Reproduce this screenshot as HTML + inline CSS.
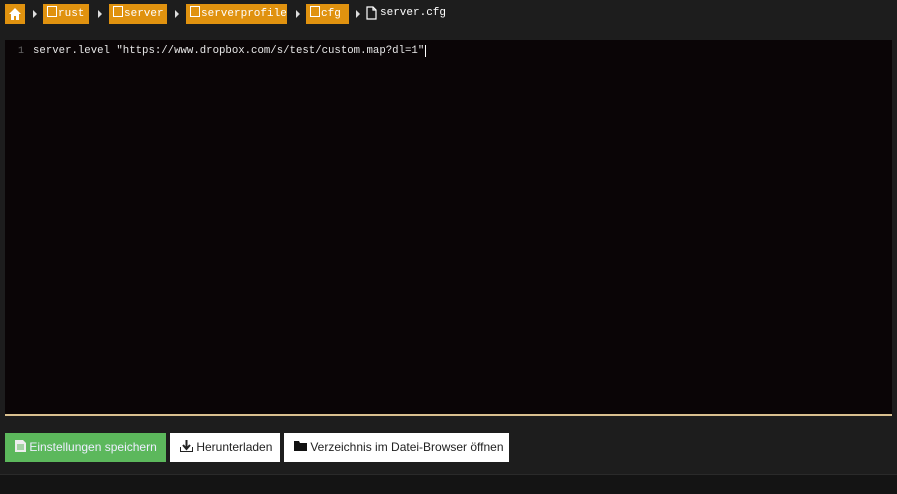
<!DOCTYPE html><html><head><style>
body{margin:0;width:897px;height:493px;background:#1d1d1d;position:relative;overflow:hidden;font-family:"Liberation Sans",sans-serif}
div{white-space:nowrap}
.bc{position:absolute;top:4px;height:20px;background:#e0920f;color:#fff;font:11px "Liberation Mono",monospace;line-height:20px;box-sizing:border-box;padding-left:4px}
.bc i{display:inline-block;width:8px;height:9px;border:1px solid #fff;vertical-align:-1px;margin-right:1px}
.ar{position:absolute;top:10px;width:0;height:0;border-left:4px solid #ddd;border-top:4px solid transparent;border-bottom:4px solid transparent}
.ed{position:absolute;left:5px;top:40px;width:887px;height:374px;background:#0a0506;border-bottom:2px solid #d9c08f}
.ln{position:absolute;left:18px;top:46px;color:#666;font:10px "Liberation Mono",monospace}
.code{position:absolute;left:33px;top:45px;color:#e8e8e8;font:10.7px "Liberation Mono",monospace}
.btn{position:absolute;top:433px;height:29px;line-height:29px;font-size:12px;box-sizing:border-box;padding-left:10px}
.bot{position:absolute;left:0;top:474px;width:897px;height:19px;background:#141414;border-top:1px solid #2a2a2a}
</style></head><body>
<div class="bc" style="left:5px;width:20px;padding:0">
<svg width="20" height="20" viewBox="0 0 20 20"><path d="M10 4 L4 10 H6 V16 H9 V12 H11 V16 H14 V10 H16 Z" fill="#fff"/></svg></div>
<div class="ar" style="left:33px"></div>
<div class="bc" style="left:43px;width:46px"><i></i>rust</div>
<div class="ar" style="left:98px"></div>
<div class="bc" style="left:109px;width:58px"><i></i>server</div>
<div class="ar" style="left:175px"></div>
<div class="bc" style="left:186px;width:101px"><i></i>serverprofile</div>
<div class="ar" style="left:296px"></div>
<div class="bc" style="left:306px;width:43px"><i></i>cfg</div>
<div class="ar" style="left:356px"></div>
<svg style="position:absolute;left:366px;top:6px" width="11" height="14" viewBox="0 0 11 14"><path d="M1 1H7L10 4V13H1Z M7 1V4H10" fill="none" stroke="#fff" stroke-width="1.2"/></svg>
<div style="position:absolute;left:380px;top:7px;color:#fff;font:11px 'Liberation Mono',monospace">server.cfg</div>
<div class="ed"></div>
<div class="ln">1</div>
<div class="code">server.level "https://www.dropbox.com/s/test/custom.map?dl=1"<span style="border-left:1px solid #fff;margin-left:1px"></span></div>
<div class="btn" style="left:5px;width:161px;background:#5cb85c;color:#eef">
<svg width="11" height="12" viewBox="0 0 11 12" style="vertical-align:-1px"><path d="M0 0H8L11 3V12H0Z" fill="#eee"/><path d="M2 5H9M2 7H9M2 9H9" stroke="#5cb85c"/></svg> Einstellungen speichern</div>
<div class="btn" style="left:170px;width:110px;background:#fff;color:#222">
<svg width="13" height="12" viewBox="0 0 13 12" style="vertical-align:-1px"><path d="M6.5 0V8M3 5L6.5 9L10 5" stroke="#222" stroke-width="2" fill="none"/><path d="M0 7V12H13V7" stroke="#222" stroke-width="2" fill="none"/></svg> Herunterladen</div>
<div class="btn" style="left:284px;width:225px;background:#fff;color:#222">
<svg width="13" height="10" viewBox="0 0 13 10" style="vertical-align:0"><path d="M0 0H5L6 2H13V10H0Z" fill="#111"/></svg> Verzeichnis im Datei-Browser öffnen</div>
<div class="bot"></div>
</body></html>
